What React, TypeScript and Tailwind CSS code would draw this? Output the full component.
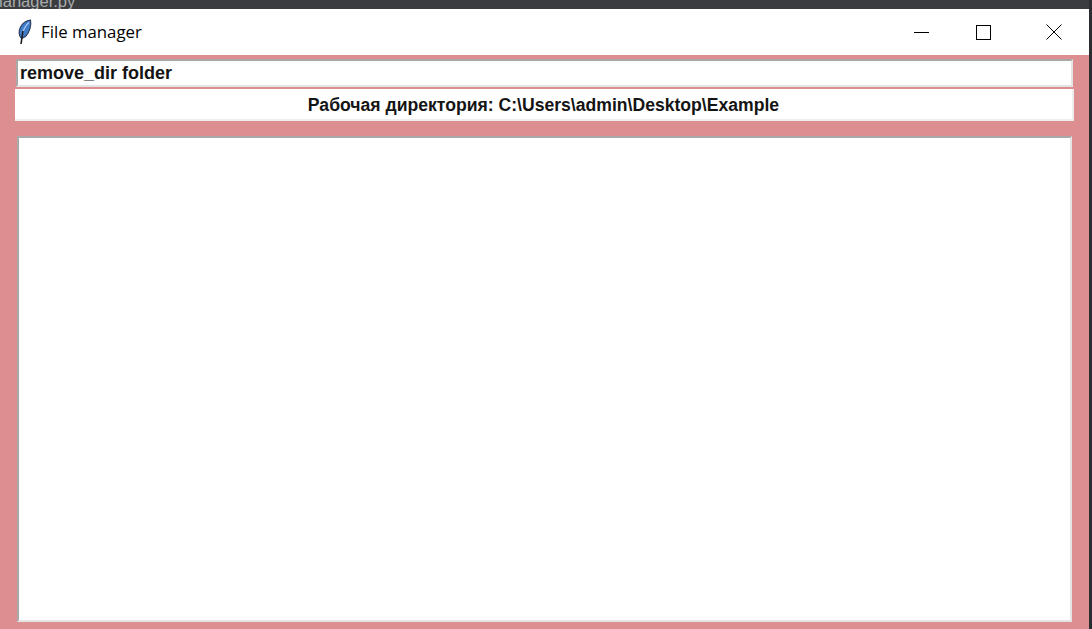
const Feather = () => (
  <svg width="16" height="26" viewBox="0 0 16 26" className="block">
    <path d="M14.5 1 C15.5 6 14 13 9.5 17.5 L5.5 19.5 C2.5 17 2.5 12 4.5 8 C7 3.5 10.5 1.5 14.5 1 Z" fill="#3f7cc9" stroke="#2b3a55" strokeWidth="1.1" />
    <path d="M13 3.5 C10 6 7.5 10 6.5 15" fill="none" stroke="#a9cbef" strokeWidth="1.2" />
    <path d="M7 12 L5 25" fill="none" stroke="#1c1c24" strokeWidth="1.6" />
  </svg>
);

const WindowButtons = () => (
  <div className="flex items-center">
    <svg width="15" height="15" viewBox="0 0 15 15" className="mr-[47px]">
      <path d="M0 7.5 H15" stroke="#000" strokeWidth="1" />
    </svg>
    <svg width="15" height="15" viewBox="0 0 15 15" className="mr-[55px]">
      <rect x="0.5" y="0.5" width="14" height="14" fill="none" stroke="#000" strokeWidth="1" />
    </svg>
    <svg width="16" height="16" viewBox="0 0 16 16" className="mr-[27px]">
      <path d="M0.5 0.5 L15.5 15.5 M15.5 0.5 L0.5 15.5" stroke="#000" strokeWidth="1" />
    </svg>
  </div>
);

const App = () => {
  return (
    <main className="flex h-[629px] w-[1092px] overflow-hidden bg-[#2b2d30]">
      <div className="flex w-[1089px] flex-col">
        <div className="flex h-[9px] items-end overflow-hidden bg-[#3a3c3f]">
          <span className="ml-[-11px] text-[16.5px] leading-[16px] text-[#a9abad] [font-family:'Liberation_Sans',sans-serif]">
            manager.py
          </span>
        </div>
        <header className="flex h-[46px] items-center justify-between bg-white pl-[16px]">
          <div className="flex items-center gap-[9px]">
            <Feather />
            <span className="text-[16.8px] text-black [font-family:'Open_Sans',sans-serif]">File manager</span>
          </div>
          <WindowButtons />
        </header>
        <section className="flex flex-1 flex-col bg-[#dc8e90] pb-[7px] pl-[15px] pr-[15px] pt-[4px]">
          <div className="mx-[1px] flex h-[28px] items-center border-2 border-b-[#e4e4e4] border-l-[#a8a8a8] border-r-[#e4e4e4] border-t-[#a8a8a8] bg-white pl-[2px] text-[18px] font-bold text-[#141414] [font-family:'Liberation_Sans',sans-serif]">
            remove_dir folder
          </div>
          <div className="mt-[2px] flex h-[32px] items-center justify-center border-b-2 border-r-2 border-[#eeeeee] bg-white pt-[2px] text-[17.6px] font-bold text-[#141414] [font-family:'Liberation_Sans',sans-serif]">
            Рабочая директория: C:\Users\admin\Desktop\Example
          </div>
          <div className="mx-[2px] mt-[15px] flex-1 border-2 border-b-[#e4e4e4] border-l-[#a8a8a8] border-r-[#e4e4e4] border-t-[#a8a8a8] bg-white" />
        </section>
      </div>
    </main>
  );
};

export default App;
